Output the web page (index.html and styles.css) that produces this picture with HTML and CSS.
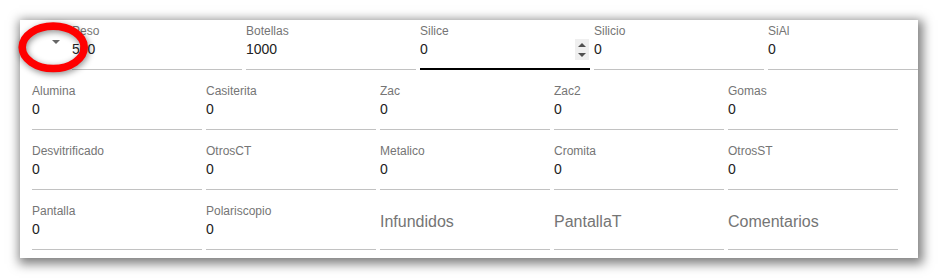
FILE: index.html
```html
<!DOCTYPE html>
<html lang="es">
<head>
<meta charset="utf-8">
<title>Formulario</title>
<link rel="stylesheet" href="styles.css">
</head>
<body>
<div class="stage">
  <div class="panel">
    <div class="row row-first">
      <div class="field"><div class="label">Peso</div><div class="input">500</div></div>
      <div class="field"><div class="label">Botellas</div><div class="input">1000</div></div>
      <div class="field"><div class="label">Silice</div><div class="input focused">0<span class="spin"><svg width="14" height="21" viewBox="0 0 14 21"><polygon points="3,8 11,8 7,4" fill="#505050"/><polygon points="3,14 11,14 7,18" fill="#505050"/></svg></span></div></div>
      <div class="field"><div class="label">Silicio</div><div class="input">0</div></div>
      <div class="field"><div class="label">SiAl</div><div class="input">0</div></div>
    </div>
    <div class="row">
      <div class="field"><div class="label">Alumina</div><div class="input">0</div></div>
      <div class="field"><div class="label">Casiterita</div><div class="input">0</div></div>
      <div class="field"><div class="label">Zac</div><div class="input">0</div></div>
      <div class="field"><div class="label">Zac2</div><div class="input">0</div></div>
      <div class="field"><div class="label">Gomas</div><div class="input">0</div></div>
    </div>
    <div class="row">
      <div class="field"><div class="label">Desvitrificado</div><div class="input">0</div></div>
      <div class="field"><div class="label">OtrosCT</div><div class="input">0</div></div>
      <div class="field"><div class="label">Metalico</div><div class="input">0</div></div>
      <div class="field"><div class="label">Cromita</div><div class="input">0</div></div>
      <div class="field"><div class="label">OtrosST</div><div class="input">0</div></div>
    </div>
    <div class="row">
      <div class="field"><div class="label">Pantalla</div><div class="input">0</div></div>
      <div class="field"><div class="label">Polariscopio</div><div class="input">0</div></div>
      <div class="field"><div class="placeholder">Infundidos</div></div>
      <div class="field"><div class="placeholder">PantallaT</div></div>
      <div class="field"><div class="placeholder">Comentarios</div></div>
    </div>
  </div>
  <span class="caret"></span>
  <svg class="annot" width="90" height="70" viewBox="0 0 90 70"><ellipse cx="43.2" cy="32.3" rx="31" ry="21.2" fill="none" stroke="#ff0000" stroke-width="7.6"/></svg>
</div>
</body>
</html>
```

FILE: styles.css
```css
html, body {
  margin: 0;
  background: #ffffff;
}
body {
  padding: 20px;
  font-family: "Liberation Sans", Arial, sans-serif;
}
.stage {
  position: relative;
  width: 898px;
  height: 238px;
}
.panel {
  box-sizing: border-box;
  width: 898px;
  height: 238px;
  background: #ffffff;
  overflow: hidden;
  padding: 4px 20px 8px 12px;
  display: flex;
  flex-direction: column;
  gap: 14px;
  box-shadow: 2px 3px 10px 3px rgba(0, 0, 0, 0.5);
}
.row {
  display: flex;
  gap: 4px;
}
.row-first {
  margin-left: 40px;
}
.field {
  flex: 0 0 170px;
  width: 170px;
  display: flex;
  flex-direction: column;
}
.label {
  font-size: 12px;
  line-height: 14px;
  height: 14px;
  color: #757575;
}
.input {
  position: relative;
  font-size: 14px;
  line-height: 20px;
  color: #222222;
  padding: 1px 0 10px 0;
  border-bottom: 1px solid #c2c2c2;
}
.input.focused {
  padding-bottom: 9px;
  border-bottom: 2px solid #000000;
}
.spin {
  position: absolute;
  right: 1px;
  top: 1px;
  width: 14px;
  height: 21px;
  background: #efefef;
  display: block;
}
.spin svg {
  display: block;
}
.placeholder {
  font-size: 16px;
  line-height: 20px;
  color: #757575;
  padding: 8px 0 17px 0;
  border-bottom: 1px solid #c2c2c2;
}
.caret {
  position: absolute;
  left: 32px;
  top: 20px;
  width: 0;
  height: 0;
  border-left: 4px solid transparent;
  border-right: 4px solid transparent;
  border-top: 4px solid #666666;
}
.annot {
  position: absolute;
  left: -10px;
  top: -5px;
  overflow: visible;
  filter: drop-shadow(1px 2px 3px rgba(0, 0, 0, 0.45));
}
```
